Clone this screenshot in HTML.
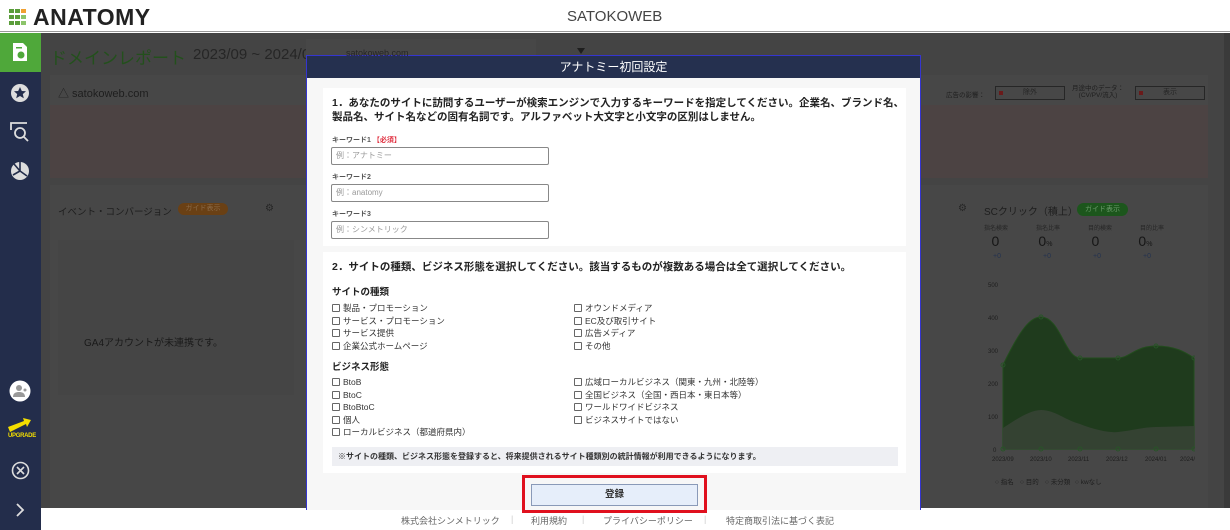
<!DOCTYPE html>
<html><head><meta charset="utf-8">
<style>
*{margin:0;padding:0;box-sizing:border-box}
body{width:1230px;height:530px;overflow:hidden;position:relative;background:#fff;font-family:"Liberation Sans","Noto Sans CJK JP",sans-serif;color:#333}
.a{position:absolute}
.hdr{left:0;top:0;width:1230px;height:32px;background:#fff;border-bottom:1px solid #999}
.side{left:0;top:33px;width:41px;height:497px;background:#232d4b}
.main{left:41px;top:33px;width:1189px;height:475px;background:#444}
.card{background:#474747}
.foot{left:41px;top:508px;width:1189px;height:22px;background:#fff;font-size:9px;color:#666}
.modal{left:306px;top:55px;width:615px;height:455px;background:#f7f7f7;border-left:1px solid #3535d0;border-right:1px solid #3535d0}
.mh{left:0;top:0;width:100%;height:23px;background:#25304f;color:#fff;text-align:center;font-size:12px;line-height:23px;border-top:1px solid #3535d0}
.sec{background:#fff;left:16px;width:583px}
.q{font-size:10.5px;font-weight:bold;color:#222;line-height:14px}
.lbl{font-size:7px;font-weight:bold;color:#555}
.inp{width:218px;height:18px;border:1px solid #888;border-radius:2px;font-size:8px;color:#999;padding-left:4px;line-height:16px}
.cb{font-size:8.5px;color:#333;height:12.5px;line-height:12.5px;white-space:nowrap}
.cb i{display:inline-block;width:8px;height:8px;border:1px solid #666;border-radius:1px;margin-right:3px;vertical-align:-1px}
.h4{font-size:9.5px;font-weight:bold;color:#222}
</style></head><body>
<div class="a hdr">
 <svg class="a" style="left:9px;top:9px" width="18" height="16" viewBox="0 0 18 16">
  <g fill="#5a9d3a"><rect x="0" y="0" width="5" height="4"/><rect x="6" y="0" width="5" height="4"/><rect x="0" y="6" width="5" height="4"/><rect x="6" y="6" width="5" height="4"/><rect x="0" y="12" width="5" height="4"/><rect x="6" y="12" width="5" height="4"/><rect x="12" y="6" width="5" height="4" fill="#8cc46a"/><rect x="12" y="12" width="5" height="4" fill="#8cc46a"/></g>
  <rect x="12" y="0" width="5" height="4" fill="#f0a030"/></svg>
 <div class="a" style="left:33px;top:4px;font-size:23px;font-weight:bold;color:#222;letter-spacing:.5px">ANATOMY</div>
 <div class="a" style="left:567px;top:8px;font-size:15px;color:#444">SATOKOWEB</div>
</div>
<div class="a side">
 <div class="a" style="left:0;top:0;width:41px;height:39px;background:#4fa83a"></div>
 <svg class="a" style="left:11px;top:9px" width="18" height="20" viewBox="0 0 18 20"><path d="M2 1h10l4 4v14H2z" fill="#fff"/><rect x="5" y="5" width="6" height="1.5" fill="#4fa83a"/><circle cx="10" cy="13" r="3.5" fill="#4fa83a"/></svg>
 <svg class="a" style="left:10px;top:50px" width="20" height="20" viewBox="0 0 20 20"><circle cx="10" cy="10" r="9" fill="#ddd"/><path d="M10 4l1.8 4 4.2.3-3.2 2.8 1 4.1L10 13l-3.8 2.2 1-4.1L4 8.3l4.2-.3z" fill="#232d4b"/></svg>
 <svg class="a" style="left:9px;top:88px" width="22" height="22" viewBox="0 0 22 22" fill="none" stroke="#ddd" stroke-width="1.8"><path d="M2 9V2h16"/><circle cx="11" cy="12" r="5"/><path d="M15 16l4 4"/></svg>
 <svg class="a" style="left:10px;top:128px" width="20" height="20" viewBox="0 0 20 20"><circle cx="10" cy="10" r="9" fill="#ddd"/><path d="M10 1v9l7 5M10 10l-7 4M10 10L4 3" stroke="#232d4b" stroke-width="1.6" fill="none"/></svg>
 <svg class="a" style="left:9px;top:347px" width="22" height="22" viewBox="0 0 22 22"><circle cx="11" cy="11" r="10.5" fill="#fff"/><circle cx="10" cy="8" r="3" fill="#999"/><path d="M4 17c0-4 3-5 6-5s6 1 6 5z" fill="#999"/><circle cx="16" cy="10" r="1.5" fill="#999"/></svg>
 <svg class="a" style="left:8px;top:385px" width="24" height="14" viewBox="0 0 24 14"><path d="M0 9l16-6-1-3 8 2-4 7-1-3L2 14z" fill="#f4de00"/></svg>
 <div class="a" style="left:8px;top:400px;font-size:6px;font-weight:bold;color:#f4de00;letter-spacing:-.3px">UPGRADE</div>
 <svg class="a" style="left:11px;top:428px" width="19" height="19" viewBox="0 0 19 19" fill="none" stroke="#ddd" stroke-width="1.6"><circle cx="9.5" cy="9.5" r="8"/><path d="M6 6l7 7M13 6l-7 7"/></svg>
 <svg class="a" style="left:15px;top:470px" width="10" height="14" viewBox="0 0 10 14" fill="none" stroke="#ddd" stroke-width="1.8"><path d="M2 1l6 6-6 6"/></svg>
</div>
<div class="a main">
 <div class="a" style="left:9px;top:11px;font-size:17px;color:#23501c">ドメインレポート</div>
 <div class="a" style="left:152px;top:13px;font-size:15px;color:#262626">2023/09 ~ 2024/02</div>
 <div class="a" style="left:265px;top:6px;width:230px;height:22px;background:#474747"></div>
 <div class="a card" style="left:9px;top:42px;width:1158px;height:30px"></div>
 <div class="a" style="left:17px;top:52px;font-size:11px;color:#1e1e1e">△ satokoweb.com</div>
 <div class="a" style="left:905px;top:56px;font-size:6.5px;color:#1e1e1e">広告の影響：</div>
 <div class="a" style="left:954px;top:53px;width:70px;height:14px;border:1px solid #262626;font-size:7px;color:#262626;text-align:center;line-height:12px"><span style="position:absolute;left:3px;top:4px;width:4px;height:4px;background:#6a1a1a"></span>除外</div>
 <div class="a" style="left:1031px;top:52px;font-size:6.5px;color:#1e1e1e;line-height:7px;text-align:center">月途中のデータ：<br>(CV/PV/流入)</div>
 <div class="a" style="left:1094px;top:53px;width:70px;height:14px;border:1px solid #262626;font-size:7px;color:#262626;text-align:center;line-height:12px"><span style="position:absolute;left:3px;top:4px;width:4px;height:4px;background:#6a1a1a"></span>表示</div>
 <div class="a" style="left:9px;top:72px;width:1158px;height:73px;background:#4c4343"></div>
 <div class="a card" style="left:9px;top:152px;width:1158px;height:323px"></div>
 <div class="a" style="left:17px;top:171px;font-size:9.5px;color:#1e1e1e">イベント・コンバージョン</div>
 <div class="a" style="left:137px;top:170px;width:50px;height:12px;border-radius:6px;background:#6a4014;color:#8a6a48;font-size:7px;text-align:center;line-height:12px">ガイド表示</div>
 <div class="a" style="left:224px;top:170px;font-size:10px;color:#262626">⚙</div>
 <div class="a" style="left:17px;top:207px;width:236px;height:155px;background:#454545"></div>
 <div class="a" style="left:43px;top:301px;font-size:10px;color:#1a1a1a">GA4アカウントが未連携です。</div>
 <div class="a" style="left:917px;top:170px;font-size:10px;color:#262626">⚙</div>
 <div class="a" style="left:943px;top:170px;font-size:10px;color:#1e1e1e">SCクリック（積上）</div>
 <div class="a" style="left:1036px;top:170px;width:51px;height:13px;border-radius:7px;background:#1c561c;color:#6a9a6a;font-size:7px;text-align:center;line-height:13px">ガイド表示</div>
 <div class="a" style="left:943px;top:190px;width:180px;font-size:6px;color:#262626;display:flex;justify-content:space-between"><span>指名検索</span><span>指名比率</span><span>目的検索</span><span>目的比率</span></div>
 <div class="a" style="left:931px;top:200px;font-size:14px;color:#161616;width:200px;display:flex;justify-content:space-around"><span>0</span><span>0<small style="font-size:7px">%</small></span><span>0</span><span>0<small style="font-size:7px">%</small></span></div>
 <div class="a" style="left:931px;top:220px;font-size:7px;color:#23324f;width:200px;display:flex;justify-content:space-around"><span>+0</span><span>+0</span><span>+0</span><span>+0</span></div>
 <div class="a" style="left:1183px;top:0;width:6px;height:475px;background:#3a3a3a"></div>
</div>
<svg class="a" style="left:980px;top:278px" width="215" height="215" viewBox="980 278 215 215">
 <g font-size="6" fill="#1e1e1e" font-family="Liberation Sans">
 <text x="988" y="287">500</text><text x="988" y="320">400</text><text x="988" y="353">300</text><text x="988" y="386">200</text><text x="988" y="419">100</text><text x="993" y="452">0</text>
 <text x="992" y="461">2023/09</text><text x="1030" y="461">2023/10</text><text x="1068" y="461">2023/11</text><text x="1106" y="461">2023/12</text><text x="1145" y="461">2024/01</text><text x="1180" y="461">2024/02</text>
 </g>
 <path d="M1003 365C1020 330 1030 317 1041 317C1060 317 1065 358 1080 358L1118 358C1130 358 1135 346 1156 346C1175 346 1185 352 1194 358L1194 449L1003 449Z" fill="#1f3b1d" stroke="#224d1d"/>
 <path d="M1003 428C1015 420 1030 410 1041 410C1055 410 1065 420 1080 424C1095 430 1110 433 1118 432C1135 430 1145 427 1156 427L1194 426L1194 449L1003 449Z" fill="#344232"/>
 <g fill="none" stroke="#285428" stroke-width="1"><circle cx="1003" cy="365" r="2"/><circle cx="1041" cy="317" r="2"/><circle cx="1080" cy="358" r="2"/><circle cx="1118" cy="358" r="2"/><circle cx="1156" cy="346" r="2"/><circle cx="1194" cy="358" r="2"/>
 <circle cx="1003" cy="449" r="2"/><circle cx="1041" cy="449" r="2"/><circle cx="1080" cy="449" r="2"/><circle cx="1118" cy="449" r="2"/><circle cx="1156" cy="449" r="2"/><circle cx="1194" cy="449" r="2"/></g>
 <g font-size="6.5" fill="#1e1e1e" font-family="Liberation Sans,Noto Sans CJK JP"><text x="995" y="484">○ 指名</text><text x="1020" y="484">○ 目的</text><text x="1045" y="484">○ 未分類</text><text x="1075" y="484">○ kwなし</text></g>
</svg>
<div class="a foot">
 <div class="a" style="left:360px;top:6px">株式会社シンメトリック</div>
 <div class="a" style="left:470px;top:6px;color:#ccc">|</div>
 <div class="a" style="left:490px;top:6px">利用規約</div>
 <div class="a" style="left:541px;top:6px;color:#ccc">|</div>
 <div class="a" style="left:562px;top:6px">プライバシーポリシー</div>
 <div class="a" style="left:663px;top:6px;color:#ccc">|</div>
 <div class="a" style="left:685px;top:6px">特定商取引法に基づく表記</div>
</div>
<div class="a modal">
 <div class="a mh">アナトミー初回設定</div>
 <div class="a sec" style="top:33px;height:158px">
  <div class="a q" style="left:9px;top:8px;width:572px">1．あなたのサイトに訪問するユーザーが検索エンジンで入力するキーワードを指定してください。企業名、ブランド名、<br>製品名、サイト名などの固有名詞です。アルファベット大文字と小文字の区別はしません。</div>
  <div class="a lbl" style="left:9px;top:47px">キーワード1 <span style="color:#e03040">【必須】</span></div>
  <div class="a inp" style="left:8px;top:59px">例：アナトミー</div>
  <div class="a lbl" style="left:9px;top:84px">キーワード2</div>
  <div class="a inp" style="left:8px;top:96px">例：anatomy</div>
  <div class="a lbl" style="left:9px;top:121px">キーワード3</div>
  <div class="a inp" style="left:8px;top:133px">例：シンメトリック</div>
 </div>
 <div class="a sec" style="top:197px;height:221px">
  <div class="a q" style="left:9px;top:8px">2．サイトの種類、ビジネス形態を選択してください。該当するものが複数ある場合は全て選択してください。</div>
  <div class="a h4" style="left:9px;top:32px">サイトの種類</div>
  <div class="a" style="left:9px;top:50px"><div class="cb"><i></i>製品・プロモーション</div><div class="cb"><i></i>サービス・プロモーション</div><div class="cb"><i></i>サービス提供</div><div class="cb"><i></i>企業公式ホームページ</div></div>
  <div class="a" style="left:251px;top:50px"><div class="cb"><i></i>オウンドメディア</div><div class="cb"><i></i>EC及び取引サイト</div><div class="cb"><i></i>広告メディア</div><div class="cb"><i></i>その他</div></div>
  <div class="a h4" style="left:9px;top:107px">ビジネス形態</div>
  <div class="a" style="left:9px;top:124px"><div class="cb"><i></i>BtoB</div><div class="cb"><i></i>BtoC</div><div class="cb"><i></i>BtoBtoC</div><div class="cb"><i></i>個人</div><div class="cb"><i></i>ローカルビジネス（都道府県内）</div></div>
  <div class="a" style="left:251px;top:124px"><div class="cb"><i></i>広域ローカルビジネス（関東・九州・北陸等）</div><div class="cb"><i></i>全国ビジネス（全国・西日本・東日本等）</div><div class="cb"><i></i>ワールドワイドビジネス</div><div class="cb"><i></i>ビジネスサイトではない</div></div>
  <div class="a" style="left:9px;top:195px;width:566px;height:19px;background:#eeeff3;font-size:8px;font-weight:bold;color:#333;line-height:19px;padding-left:6px">※サイトの種類、ビジネス形態を登録すると、将来提供されるサイト種類別の統計情報が利用できるようになります。</div>
 </div>
 <div class="a" style="left:215px;top:420px;width:185px;height:38px;border:3px solid #e0101e"></div>
 <div class="a" style="left:224px;top:429px;width:167px;height:22px;background:#e6eefa;border:1px solid #8a9ab8;font-size:9.5px;font-weight:bold;color:#333;text-align:center;line-height:20px">登録</div>
</div>
<div class="a" style="left:577px;top:48px;width:0;height:0;border-left:4px solid transparent;border-right:4px solid transparent;border-top:6px solid #1e1e1e"></div>
<div class="a" style="left:346px;top:48px;font-size:9px;color:#262626">satokoweb.com</div>
</body></html>
